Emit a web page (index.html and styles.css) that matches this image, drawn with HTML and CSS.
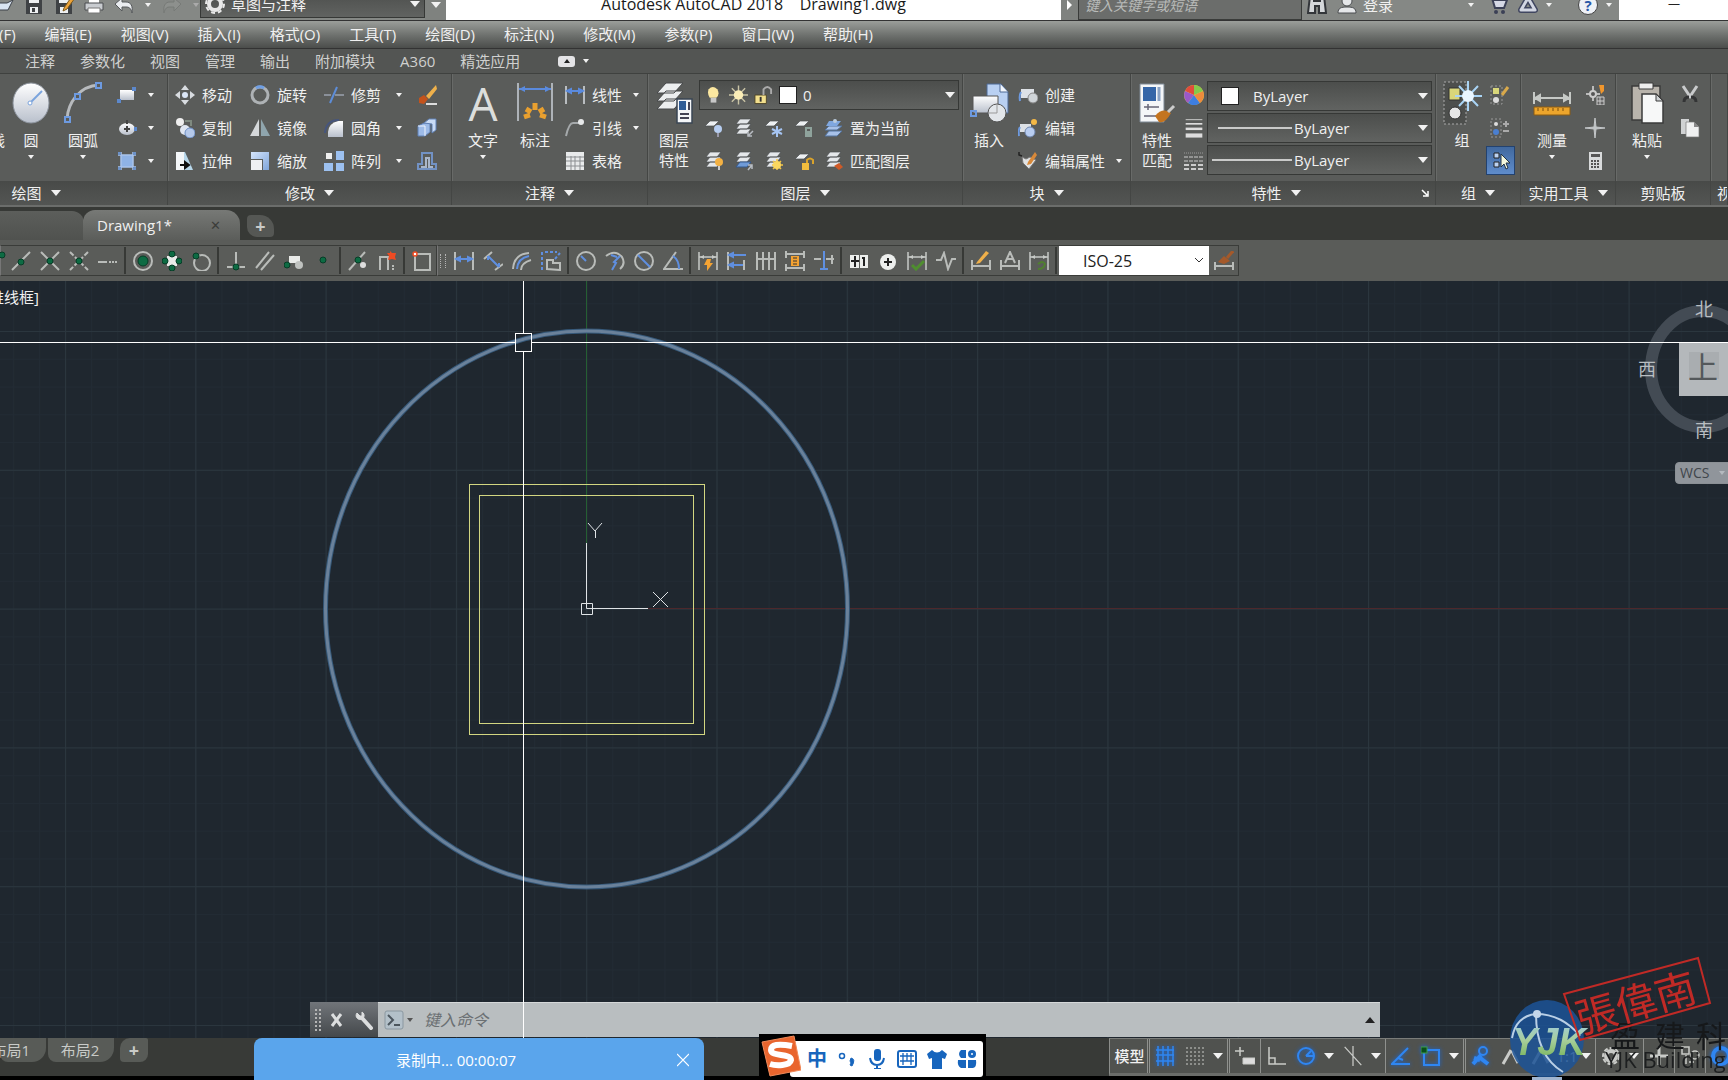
FILE: index.html
```html
<!DOCTYPE html>
<html lang="zh-CN">
<head>
  <meta charset="UTF-8">
  <meta name="viewport" content="width=device-width, initial-scale=1.0">
  <title>Autodesk AutoCAD 2018 - Drawing1.dwg</title>
  <link rel="stylesheet" href="styles.css">
</head>
<body>

  <!-- shared icon parts -->
  <svg class="sprite" aria-hidden="true">
    <defs>
      <linearGradient id="silver" x1="0" y1="0" x2="0" y2="1">
        <stop offset="0" stop-color="#ffffff"/><stop offset="1" stop-color="#b9c0cc"/>
      </linearGradient>
      <linearGradient id="blue" x1="0" y1="0" x2="1" y2="1">
        <stop offset="0" stop-color="#d5e5fb"/><stop offset="1" stop-color="#7fa5da"/>
      </linearGradient>
    </defs>
    <symbol id="stack" viewBox="0 0 20 20">
      <path d="M6 1h11l-4 5H2zM6 6h11l-4 5H2zM6 11h11l-4 5H2z" fill="#e4e7ea" stroke="#4b4d50" stroke-width=".7"/>
    </symbol>
    <symbol id="stackblue" viewBox="0 0 20 20">
      <path d="M6 1h11l-4 5H2zM6 6h11l-4 5H2z" fill="#e4e7ea" stroke="#4b4d50" stroke-width=".7"/>
      <path d="M6 11h11l-4 5H2z" fill="#6f9bd8" stroke="#35588c"/>
    </symbol>
    <symbol id="sheet" viewBox="0 0 20 20">
      <path d="M6 3h9l-5 5H1z" fill="#edf0f2" stroke="#4b4d50" stroke-width=".7"/>
    </symbol>
    <symbol id="dim" viewBox="0 0 20 20">
      <path d="M1 1v18M19 1v18M1 6h18" stroke="#c6c9c6" stroke-width="1.5" fill="none"/>
      <path d="M2 6l4-2v4zM18 6l-4-2v4z" fill="#c6c9c6"/>
    </symbol>
  </svg>

  <header class="titlebar">
    <div class="quick">
      <button aria-label="打开"><svg viewBox="0 0 20 20"><path d="M1 8h12l6-3-5 10H1z" fill="#d9e4f1" stroke="#3d4148"/></svg></button>
      <button aria-label="保存"><svg viewBox="0 0 20 20"><path d="M2 1h16v18H2z" fill="#3f4245"/><path d="M5 1h10v7H5zM6 12h8v6H6z" fill="#eef0f2"/><path d="M8 13h3v4H8z" fill="#3f4245"/></svg></button>
      <button aria-label="另存为"><svg viewBox="0 0 20 20"><path d="M2 1h16v18H2z" fill="#3f4245"/><path d="M5 1h10v7H5zM6 12h8v6H6z" fill="#eef0f2"/><path d="M10 13L18 1l3 2-8 11-4 2z" fill="#eda33a" stroke="#7d5a1c"/></svg></button>
      <button aria-label="打印"><svg viewBox="0 0 20 20"><path d="M5 1h10v7H5z" fill="#fff"/><path d="M1 8h18v7H1z" fill="#c9ccd0" stroke="#4a4d50"/><path d="M4 13h12v5H4z" fill="#fff" stroke="#777"/></svg></button>
      <button aria-label="放弃"><svg viewBox="0 0 20 20"><path d="M1 9l7-6v4h4c5 0 7 4 6 11-1-5-3-6-6-6H8v4z" fill="#e9ecef" stroke="#55585b"/></svg></button>
      <i class="caret"></i>
      <button class="off" aria-label="重做"><svg viewBox="0 0 20 20"><path d="M19 9l-7-6v4H8c-5 0-7 4-6 11 1-5 3-6 6-6h4v4z" fill="#8d908d" stroke="#777a77"/></svg></button>
      <i class="caret off"></i>
    </div>
    <div class="combo workspace">
      <svg viewBox="0 0 20 20"><circle cx="10" cy="10" r="6" fill="none" stroke="#e8e8e8" stroke-width="4"/><circle cx="10" cy="10" r="9" fill="none" stroke="#e8e8e8" stroke-width="2" stroke-dasharray="4 3"/></svg>
      <select aria-label="工作空间"><option>草图与注释</option></select>
      <i class="caret big"></i>
    </div>
    <button class="custom" aria-label="自定义"><i class="caret big"></i></button>
    <div class="apptitle">Autodesk AutoCAD 2018&nbsp;&nbsp;&nbsp; Drawing1.dwg</div>
    <button class="expand" aria-label="展开"><i class="caret right"></i></button>
    <input class="search" type="text" placeholder="键入关键字或短语" aria-label="搜索">
    <div class="account">
      <button aria-label="查找"><svg viewBox="0 0 20 20"><path d="M3 1h4v5h6V1h4l2 17h-7v-7H8v7H1z" fill="#d5d8db" stroke="#33363a" stroke-width="2"/></svg></button>
      <button class="login"><svg viewBox="0 0 20 20"><circle cx="10" cy="6" r="5" fill="#e5e7e9" stroke="#4a4d50"/><path d="M1 18c0-5 3-6 9-6s9 1 9 6z" fill="#e5e7e9" stroke="#4a4d50"/></svg>登录</button>
      <i class="caret"></i>
      <button class="cart" aria-label="商店"><svg viewBox="0 0 20 20"><path d="M1 3h3l3 10h9l3-8H5" fill="#d5d8e5" stroke="#3b4056" stroke-width="2"/><circle cx="8" cy="17" r="2" fill="#3b4056"/><circle cx="15" cy="17" r="2" fill="#3b4056"/></svg></button>
      <button aria-label="A360"><svg viewBox="0 0 20 20"><path d="M10 3l7 12H3z" fill="none" stroke="#404660" stroke-width="6" stroke-linejoin="round"/><path d="M10 3l7 12H3z" fill="none" stroke="#d2d6e2" stroke-width="3" stroke-linejoin="round"/></svg></button>
      <i class="caret"></i>
      <button class="help" aria-label="帮助">?</button>
      <i class="caret"></i>
    </div>
    <div class="window"><button aria-label="最小化">—</button></div>
  </header>

  <nav class="menubar">
    <a href="#">文件(F)</a>
    <a href="#">编辑(E)</a>
    <a href="#">视图(V)</a>
    <a href="#">插入(I)</a>
    <a href="#">格式(O)</a>
    <a href="#">工具(T)</a>
    <a href="#">绘图(D)</a>
    <a href="#">标注(N)</a>
    <a href="#">修改(M)</a>
    <a href="#">参数(P)</a>
    <a href="#">窗口(W)</a>
    <a href="#">帮助(H)</a>
  </nav>

  <nav class="tabs">
    <a href="#">注释</a>
    <a href="#">参数化</a>
    <a href="#">视图</a>
    <a href="#">管理</a>
    <a href="#">输出</a>
    <a href="#">附加模块</a>
    <a href="#">A360</a>
    <a href="#">精选应用</a>
    <button class="minimize" aria-label="最小化功能区"><i class="caret up"></i></button>
    <i class="caret"></i>
  </nav>

  <main class="ribbon">

    <section class="panel draw">
      <div class="tools">
        <button class="tall cut" aria-label="多段线"><svg></svg><span>线</span></button>
        <button class="tall circle">
          <svg viewBox="0 0 40 44"><ellipse cx="20" cy="22" rx="18" ry="20" fill="url(#silver)" stroke="#8b929c"/><path d="M20 21l11-11" stroke="#7ba4dd" stroke-width="2"/><circle cx="19" cy="22" r="2" fill="#fff" stroke="#7ba4dd"/></svg>
          <span>圆</span><i class="caret"></i>
        </button>
        <button class="tall arc">
          <svg viewBox="0 0 40 44"><path d="M4 38C5 22 16 5 36 4" fill="none" stroke="#b7babd" stroke-width="3"/><path d="M2 36h5v5H2zM12 13h5v5h-5zM33 2h5v5h-5z" fill="#5a5c5a" stroke="#6d9ae0" stroke-width="2"/></svg>
          <span>圆弧</span><i class="caret"></i>
        </button>
        <div class="rows">
          <button class="cmd" aria-label="矩形"><svg viewBox="0 0 20 20"><path d="M3 5h14v10H3z" fill="url(#silver)"/><path d="M0 14h4v4H0zM15 2h4v4h-4z" fill="#5c88cc"/></svg><i class="caret"></i></button>
          <button class="cmd" aria-label="椭圆"><svg viewBox="0 0 20 20"><ellipse cx="10" cy="11" rx="8" ry="6" fill="url(#silver)"/><path d="M10 8v6M7 11h6" stroke="#444" stroke-width="2"/><path d="M10 2v4" stroke="#444" stroke-width="2"/><path d="M17 9h3v4h-3z" fill="#5c88cc"/></svg><i class="caret"></i></button>
          <button class="cmd" aria-label="图案填充"><svg viewBox="0 0 20 20"><path d="M4 4h12v12H4z" fill="#8fb3e6"/><path d="M4 1v18M16 1v18M1 4h18M1 16h18" stroke="#a9c4ec" stroke-width="1.5"/><path d="M1 1h3v3H1zM16 1h3v3h-3zM1 16h3v3H1zM16 16h3v3h-3z" fill="#6d92c8"/></svg><i class="caret"></i></button>
        </div>
      </div>
      <h2>绘图<i class="caret big"></i></h2>
    </section>

    <section class="panel modify">
      <div class="tools">
        <div class="grid">
          <button class="cmd"><svg viewBox="0 0 20 20"><circle cx="10" cy="10" r="3" fill="#dbe6f6"/><path d="M10 0l4 5H6zM10 20l4-5H6zM0 10l5-4v8zM20 10l-5-4v8z" fill="#d8dce0"/></svg>移动</button>
          <button class="cmd"><svg viewBox="0 0 20 20"><circle cx="10" cy="10" r="8" fill="none" stroke="#aeb2b5" stroke-width="3"/><path d="M6 3a8 8 0 0 1 8 0" fill="none" stroke="#6f9fe4" stroke-width="3"/></svg>旋转</button>
          <button class="cmd"><svg viewBox="0 0 20 20"><path d="M0 10h7M11 10h9" stroke="#8a9099" stroke-width="2"/><path d="M13 2L6 18" stroke="#5d8dd8" stroke-width="2"/></svg>修剪<i class="caret"></i></button>
          <button class="cmd" aria-label="删除"><svg viewBox="0 0 20 20"><path d="M19 0l1 4-8 10-3-3z" fill="#efb14b"/><path d="M2 13l5-3 4 4-4 5-5-1z" fill="#c4531c"/><path d="M9 19h11" stroke="#ddd" stroke-width="2"/></svg></button>

          <button class="cmd"><svg viewBox="0 0 20 20"><circle cx="5" cy="4" r="4" fill="#eee"/><path d="M10 3h6v5" fill="none" stroke="#7f8a80" stroke-width="2"/><circle cx="10" cy="12" r="5" fill="#dfe6f1"/><circle cx="15" cy="15" r="5" fill="#b5c9ea" stroke="#6d8fc4"/></svg>复制</button>
          <button class="cmd"><svg viewBox="0 0 20 20"><path d="M9 1v17H0z" fill="#d5d8da"/><path d="M11 1v17h9z" fill="#8fa5ad"/></svg>镜像</button>
          <button class="cmd"><svg viewBox="0 0 20 20"><path d="M4 19V14Q5 5 14 3h5v16z" fill="url(#silver)"/><path d="M1 15Q2 2 15 2" fill="none" stroke="#46557c" stroke-width="2"/></svg>圆角<i class="caret"></i></button>
          <button class="cmd" aria-label="分解"><svg viewBox="0 0 20 20"><path d="M1 8l6-3h6v9l-5 4H1z" fill="#9dbbe8" stroke="#5f80b5"/><path d="M7 5l5-4h7v11l-4 3V6z" fill="#c9dbf5" stroke="#5f80b5"/><path d="M1 8h7v10" fill="none" stroke="#eef4fd"/></svg></button>

          <button class="cmd"><svg viewBox="0 0 20 20"><path d="M1 1h9l8 18H1z" fill="#b7d7ea"/><path d="M1 1h8v18H1z" fill="#f3f6f8"/><path d="M5 14h7M10 11l4 3-4 3z" stroke="#111" stroke-width="2"/></svg>拉伸</button>
          <button class="cmd"><svg viewBox="0 0 20 20"><path d="M1 1h18v18h-6V8H1z" fill="url(#blue)"/><path d="M1 9h11v10H1z" fill="#eef0f3"/></svg>缩放</button>
          <button class="cmd"><svg viewBox="0 0 20 20"><path d="M2 2h6v6H2z" fill="#eee"/><path d="M12 0h8v9h-8zM0 12h9v8H0zM12 12h8v8h-8z" fill="#9cc0ef"/></svg>阵列<i class="caret"></i></button>
          <button class="cmd" aria-label="偏移"><svg viewBox="0 0 20 20"><path d="M1 18h18v-5h-4V2H5v11H1z" fill="none" stroke="#7292c4" stroke-width="2"/><path d="M4 16h5V7h3v9h4" fill="none" stroke="#a9b6ca" stroke-width="2"/></svg></button>
        </div>
      </div>
      <h2>修改<i class="caret big"></i></h2>
    </section>

    <section class="panel annotate">
      <div class="tools">
        <button class="tall"><b class="letter">A</b><span>文字</span><i class="caret"></i></button>
        <button class="tall">
          <svg viewBox="0 0 40 44"><path d="M3 2v38M37 2v38" stroke="#aeb3b8" stroke-width="2"/><path d="M4 8h32" stroke="#5a8ade" stroke-width="2"/><path d="M4 8l6-3v6zM36 8l-6-3v6z" fill="#5a8ade"/><path d="M9 36l6-2M11 28l5 3M20 22v7M29 28l-5 3M31 36l-6-2" stroke="#e9a02f" stroke-width="5"/></svg>
          <span>标注</span>
        </button>
        <div class="rows">
          <button class="cmd"><svg viewBox="0 0 20 20"><path d="M1 1v18M19 1v18" stroke="#b9bdc0" stroke-width="2"/><path d="M2 6h16M2 6l4-2v4zM18 6l-4-2v4z" stroke="#5a8ade" fill="#5a8ade" stroke-width="2"/></svg>线性<i class="caret"></i></button>
          <button class="cmd"><svg viewBox="0 0 20 20"><path d="M1 18Q4 5 8 5h6" fill="none" stroke="#a5a9ab" stroke-width="2"/><circle cx="16" cy="4" r="3" fill="#e7e9ea"/></svg>引线<i class="caret"></i></button>
          <button class="cmd"><svg viewBox="0 0 20 20"><path d="M1 1h18v18H1z" fill="#e8eaeb"/><path d="M1 6h18M1 10h18M1 15h18M6 5v14M10 5v14M15 5v14" stroke="#8b8e91"/></svg>表格</button>
        </div>
      </div>
      <h2>注释<i class="caret big"></i></h2>
    </section>

    <section class="panel layers">
      <div class="tools">
        <button class="tall">
          <svg viewBox="0 0 40 44"><path d="M12 2h17l-9 10H3zM12 10h17l-9 10H3zM12 18h17l-9 10H3z" fill="#eceeef" stroke="#46484a"/><path d="M23 18h15v24H23z" fill="#f4f6f8" stroke="#3a4654" stroke-width="1.5"/><path d="M25 20h7v9h-7z" fill="#2f5c96"/><path d="M35 21v8M26 33h9M26 37h9" stroke="#445" stroke-width="2"/></svg>
          <span>图层<br>特性</span>
        </button>
        <div class="rows">
          <div class="combo layer">
            <svg viewBox="0 0 20 20"><path d="M6 13Q3 8 5 4q4-5 9 0 3 5-1 9z" fill="#fbe7a0"/><path d="M7 13h6v5H7z" fill="#c8c8c8"/></svg>
            <svg viewBox="0 0 20 20"><path d="M10 0v20M0 10h20M3 3l14 14M17 3L3 17" stroke="#c9c3a5" stroke-width="1.5"/><circle cx="10" cy="10" r="5" fill="#fbeeb8"/></svg>
            <svg viewBox="0 0 20 20"><path d="M1 10h12v9H1z" fill="#f2df8d" stroke="#4d4528"/><path d="M10 10V4q4-5 8 0v5" fill="none" stroke="#aaa" stroke-width="2"/><path d="M7 12v5" stroke="#333" stroke-width="2"/></svg>
            <b class="swatch"></b>
            <select aria-label="图层"><option>0</option></select>
            <i class="caret big"></i>
          </div>
          <div class="strip">
            <button aria-label="关"><svg viewBox="0 0 20 20"><use href="#sheet"/><circle cx="14" cy="11" r="4" fill="#b6cdf0"/><path d="M14 15v4" stroke="#99a" stroke-width="2"/></svg></button>
            <button aria-label="隔离"><svg viewBox="0 0 20 20"><use href="#stack"/><path d="M19 13l-5 5m0-4v4h4" stroke="#b8bcc2" fill="none" stroke-width="1.5"/></svg></button>
            <button aria-label="冻结"><svg viewBox="0 0 20 20"><use href="#sheet"/><path d="M13 8v11M8 11l10 5M18 11L8 16" stroke="#a5c4f2" stroke-width="2"/></svg></button>
            <button aria-label="锁定"><svg viewBox="0 0 20 20"><use href="#sheet"/><path d="M11 13h7v6h-7z" fill="#8fa39c"/><path d="M12 13v-3h5v3" stroke="#8fa39c" fill="none" stroke-width="2"/></svg></button>
            <button class="wide"><svg viewBox="0 0 20 20"><path d="M5 8h13l-5 4H1zM5 13h13l-5 5H1z" fill="#a7c1e8" stroke="#54749f"/><path d="M5 3h12l-4 5H2z" fill="#7fa7df"/><circle cx="11" cy="3" r="2" fill="#bcd"/></svg>置为当前</button>
          </div>
          <div class="strip">
            <button aria-label="打开所有图层"><svg viewBox="0 0 20 20"><use href="#stack"/><circle cx="15" cy="11" r="4" fill="#f3b143"/><path d="M15 15v4" stroke="#ccc" stroke-width="2"/></svg></button>
            <button aria-label="取消隔离"><svg viewBox="0 0 20 20"><use href="#stackblue"/><path d="M14 19l4-5m-4 0h4v4" stroke="#b8bcc2" fill="none" stroke-width="1.5"/></svg></button>
            <button aria-label="解冻"><svg viewBox="0 0 20 20"><use href="#stack"/><path d="M13 8v11M8 14h11M9 10l8 8M17 10l-8 8" stroke="#f6c544" stroke-width="1.5"/><circle cx="13" cy="14" r="4" fill="#fbd75f"/></svg></button>
            <button aria-label="解锁"><svg viewBox="0 0 20 20"><use href="#sheet"/><path d="M8 12h7v7H8z" fill="#f2bd3e"/><path d="M13 12V9q3-3 6 0v4" stroke="#d9a32c" fill="none" stroke-width="2"/></svg></button>
            <button class="wide"><svg viewBox="0 0 20 20"><use href="#stack"/><path d="M10 15l5-3 4 4-4 3z" fill="#cf5a27"/></svg>匹配图层</button>
          </div>
        </div>
      </div>
      <h2>图层<i class="caret big"></i></h2>
    </section>

    <section class="panel block">
      <div class="tools">
        <button class="tall">
          <svg viewBox="0 0 40 44"><path d="M18 3h14l7 8v21H18z" fill="#b9d0f2" stroke="#4c6894"/><path d="M31 3v8h8" fill="#f2f6fc" stroke="#4c6894"/><path d="M4 15h25v17H4z" fill="url(#silver)" stroke="#555"/><circle cx="28" cy="32" r="9" fill="#e2e6ea" stroke="#555"/><path d="M28 32v-9M28 32h-8" stroke="#999"/><path d="M2 30h5v5H2z" fill="none" stroke="#6d9ae0" stroke-width="2"/></svg>
          <span>插入</span>
        </button>
        <div class="rows">
          <button class="cmd"><svg viewBox="0 0 20 20"><path d="M3 4h13v9H3z" fill="#dde1e6"/><circle cx="15" cy="13" r="5" fill="#cfd4d8" stroke="#888"/><path d="M3 7Q1 10 2 16" stroke="#6d9ae0" fill="none" stroke-width="2"/></svg>创建</button>
          <button class="cmd"><svg viewBox="0 0 20 20"><path d="M2 6h11v8H2z" fill="#dde1e6"/><circle cx="12" cy="14" r="5" fill="#b8cdf0" stroke="#6f86ad"/><circle cx="16" cy="4" r="3" fill="#f4b846"/><path d="M2 9Q0 12 1 18" stroke="#6d9ae0" fill="none" stroke-width="2"/></svg>编辑</button>
          <button class="cmd"><svg viewBox="0 0 20 20"><path d="M1 1v3l3 1" fill="none" stroke="#222" stroke-width="1.5"/><path d="M4 6l4 2 4-2 6 3-7 9-6-6z" fill="#e1e3e4" stroke="#777"/><path d="M10 11l7-10 2 3-6 9-4 1z" fill="#d8893a"/></svg>编辑属性<i class="caret"></i></button>
        </div>
      </div>
      <h2>块<i class="caret big"></i></h2>
    </section>

    <section class="panel props">
      <div class="tools">
        <button class="tall">
          <svg viewBox="0 0 40 44"><path d="M3 3h24v38H3z" fill="#f4f6f8" stroke="#7d8894"/><path d="M6 6h13v14H6z" fill="#3566a8"/><path d="M22 6v14" stroke="#8ba3c4" stroke-width="3"/><path d="M7 26h15M7 35h12M11 23v6" stroke="#667" stroke-width="1.5"/><path d="M18 35q6-7 12-5l4 2q-6 11-12 9z" fill="#c4741f"/><path d="M31 31l6-6" stroke="#ccc" stroke-width="3"/></svg>
          <span>特性<br>匹配</span>
        </button>
        <div class="rows icons">
          <svg viewBox="0 0 20 20"><circle cx="10" cy="10" r="10" fill="#f5e04a"/><path d="M10 10V0a10 10 0 0 0-9 6z" fill="#e14b3b"/><path d="M10 10L1 6a10 10 0 0 0 3 12z" fill="#9a59c9"/><path d="M10 10l-6 8a10 10 0 0 0 12 0z" fill="#3d7ee0"/><path d="M10 10l6 8a10 10 0 0 0 3-12z" fill="#ee8b3c"/><path d="M10 10V0a10 10 0 0 1 9 6z" fill="#86c84c"/></svg>
          <svg viewBox="0 0 20 24"><path d="M0 2h20" stroke="#ddd"/><path d="M0 7h20" stroke="#ddd" stroke-width="2"/><path d="M0 13h20" stroke="#ddd" stroke-width="3"/><path d="M0 21h20" stroke="#ddd" stroke-width="5"/></svg>
          <svg viewBox="0 0 20 20"><path d="M0 2h20" stroke="#999" stroke-dasharray="1 1"/><path d="M0 6h20M0 10h20" stroke="#ccc" stroke-dasharray="4 1"/><path d="M0 14h20M0 18h20" stroke="#ccc" stroke-width="2" stroke-dasharray="5 2"/></svg>
        </div>
        <div class="rows fields">
          <div class="combo"><b class="swatch"></b><select aria-label="对象颜色"><option>ByLayer</option></select><i class="caret big"></i></div>
          <div class="combo"><hr><select aria-label="线宽"><option>ByLayer</option></select><i class="caret big"></i></div>
          <div class="combo"><hr class="long"><select aria-label="线型"><option>ByLayer</option></select><i class="caret big"></i></div>
        </div>
      </div>
      <h2>特性<i class="caret big"></i><svg class="launcher" viewBox="0 0 8 8"><path d="M1 1l5 5M7 2v5H2" stroke="#fff" stroke-width="1.5" fill="none"/></svg></h2>
    </section>

    <section class="panel group">
      <div class="tools">
        <button class="tall">
          <svg viewBox="0 0 40 44"><path d="M2 1h22v42H2z" fill="#4d4f4d" stroke="#aaa" stroke-dasharray="2 2"/><path d="M7 7h11v12H7z" fill="#d9d77a" stroke="#333"/><circle cx="13" cy="32" r="6" fill="#e6e6e6" stroke="#333"/><path d="M26 0v30M13 15h27M17 5l19 20M36 5L17 25" stroke="#a9d4f5" stroke-width="2"/><circle cx="26" cy="15" r="6" fill="#eaf6ff"/></svg>
          <span>组</span>
        </button>
        <div class="rows">
          <button class="cmd" aria-label="组编辑"><svg viewBox="0 0 20 20"><path d="M1 1h11v18H1z" fill="none" stroke="#999" stroke-dasharray="2 2"/><path d="M3 3h6v6H3z" fill="#d9d77a"/><circle cx="6" cy="15" r="3" fill="#ddd"/><path d="M18 2l-6 8" stroke="#d9a94b" stroke-width="3"/></svg></button>
          <button class="cmd" aria-label="添加到组"><svg viewBox="0 0 20 20"><path d="M1 1h10v18H1z" fill="none" stroke="#999" stroke-dasharray="2 2"/><circle cx="6" cy="6" r="2" fill="#ddd"/><circle cx="6" cy="14" r="3" fill="#4a7fd0"/><path d="M13 6h6M16 3v6M13 13h6" stroke="#aaa" stroke-width="2"/></svg></button>
          <button class="cmd on" aria-label="启用组选择"><svg viewBox="0 0 20 20"><path d="M3 2h5v5H3zM3 11h5v5H3z" fill="#bcd3f3" stroke="#222"/><path d="M10 3v13l3-3 2 5 2-1-2-5h4z" fill="#f4f8dd" stroke="#234"/></svg></button>
        </div>
      </div>
      <h2>组<i class="caret big"></i></h2>
    </section>

    <section class="panel utils">
      <div class="tools">
        <button class="tall">
          <svg viewBox="0 0 40 44"><path d="M2 11v12M38 11v12M3 17h34M3 17l5-3v6zM37 17l-5-3v6z" stroke="#c6c9c6" stroke-width="2" fill="#c6c9c6"/><path d="M2 26h36v8H2z" fill="#eca52c" stroke="#8a5a12"/><path d="M6 27v3M11 27v3M16 27v3M21 27v3M26 27v3M31 27v3" stroke="#7a4d0c"/></svg>
          <span>测量</span><i class="caret"></i>
        </button>
        <div class="rows">
          <button class="cmd" aria-label="快速选择"><svg viewBox="0 0 20 20"><path d="M1 9h14M8 1v15" stroke="#bbb" stroke-width="2"/><circle cx="8" cy="9" r="3" fill="#555" stroke="#ccc" stroke-width="2"/><path d="M14 0h5v6l-3 3z" fill="#f0962d"/><path d="M12 12h7v8h-7zM12 16h7M15 12v8" fill="#666" stroke="#ccc"/></svg></button>
          <button class="cmd" aria-label="点坐标"><svg viewBox="0 0 20 20"><path d="M10 0l1 9 9 1-9 1-1 9-1-9-9-1 9-1z" fill="#c2c5c7" stroke="#c2c5c7"/></svg></button>
          <button class="cmd" aria-label="快速计算器"><svg viewBox="0 0 20 20"><path d="M4 1h13v18H4z" fill="#d8dadb"/><path d="M6 3h9v3H6z" fill="#555"/><path d="M6 10h9M6 13h9M6 16h9" stroke="#555" stroke-width="2" stroke-dasharray="2 1"/></svg></button>
        </div>
      </div>
      <h2>实用工具<i class="caret big"></i></h2>
    </section>

    <section class="panel clip">
      <div class="tools">
        <button class="tall">
          <svg viewBox="0 0 40 44"><path d="M5 5h28v34H5z" fill="#b9b4ac" stroke="#3b3b3b" stroke-width="1.5"/><path d="M12 2h14v6H12z" fill="#eee" stroke="#3b3b3b"/><path d="M15 13h14l7 7v22H15z" fill="#f7f8f8" stroke="#3b3b3b" stroke-width="1.5"/><path d="M29 13v7h7z" fill="#cfd2d4" stroke="#3b3b3b"/></svg>
          <span>粘贴</span><i class="caret"></i>
        </button>
        <div class="rows">
          <button class="cmd" aria-label="剪切"><svg viewBox="0 0 20 20"><path d="M3 1l8 12M17 1L9 13" stroke="#c9cbcc" stroke-width="3"/><path d="M9 12q-5 0-5 5M11 12q5 0 5 5" stroke="#333435" stroke-width="3" fill="none"/></svg></button>
          <button class="cmd" aria-label="复制裁剪"><svg viewBox="0 0 20 20"><path d="M1 1h8v15H1z" fill="#d0d2d3"/><path d="M6 4h8l5 5v10H6z" fill="#f0f1f1" stroke="#777" stroke-width=".7"/><path d="M14 4v5h5z" fill="#888"/></svg></button>
        </div>
      </div>
      <h2>剪贴板</h2>
    </section>

    <section class="panel rest">
      <div class="tools"></div>
      <h2>视图</h2>
    </section>
  </main>

  <div class="filetabs">
    <button class="start" aria-label="开始"></button>
    <button class="file">Drawing1*<span>✕</span></button>
    <button class="add" aria-label="新图形">+</button>
  </div>

  <div class="toolbars">
    <div class="toolbar">
      <button class="first" aria-label="临时追踪点"><svg viewBox="0 0 20 20"><circle cx="16" cy="4" r="3" class="snap"/></svg></button>
      <button aria-label="端点"><svg viewBox="0 0 20 20"><path d="M1 19L19 1" class="ln"/><circle cx="10" cy="11" r="3" class="snap"/></svg></button>
      <button aria-label="交点"><svg viewBox="0 0 20 20"><path d="M1 1l18 18M19 1L1 19" class="ln"/><circle cx="10" cy="10" r="3" class="snap"/></svg></button>
      <button aria-label="外观交点"><svg viewBox="0 0 20 20"><path d="M1 1l18 18M19 1L1 19" class="ln" stroke-dasharray="5 2"/><circle cx="10" cy="10" r="3" class="snap"/></svg></button>
      <button aria-label="延长线"><svg viewBox="0 0 20 20"><path d="M0 11h9M11 11h2M14 11h2M17 11h2" class="ln"/></svg></button>
      <hr>
      <button aria-label="圆心"><svg viewBox="0 0 20 20"><circle cx="10" cy="10" r="9" fill="none" class="ln"/><circle cx="10" cy="10" r="5" class="snap"/></svg></button>
      <button aria-label="象限点"><svg viewBox="0 0 20 20"><path d="M5 5h10v10H5z" fill="#e8eae8"/><circle cx="10" cy="3" r="3" class="snap"/><circle cx="10" cy="17" r="3" class="snap"/><circle cx="3" cy="10" r="3" class="snap"/><circle cx="17" cy="10" r="3" class="snap"/></svg></button>
      <button aria-label="切点"><svg viewBox="0 0 20 20"><circle cx="11" cy="12" r="8" fill="none" class="ln"/><circle cx="5" cy="5" r="3" class="snap"/></svg></button>
      <hr>
      <button aria-label="垂足"><svg viewBox="0 0 20 20"><path d="M10 1v13M1 16h18" class="ln"/><circle cx="10" cy="16" r="3" class="snap"/></svg></button>
      <button aria-label="平行线"><svg viewBox="0 0 20 20"><path d="M1 17L14 1M6 19L19 4" class="ln"/></svg></button>
      <button aria-label="插入点"><svg viewBox="0 0 20 20"><path d="M5 5h11v7H5z" fill="#e8eae8"/><circle cx="15" cy="14" r="4" fill="#bfc2bf"/><circle cx="3" cy="14" r="3" class="snap"/></svg></button>
      <button aria-label="节点"><svg viewBox="0 0 20 20"><circle cx="10" cy="9" r="3" class="snap"/></svg></button>
      <hr>
      <button aria-label="最近点"><svg viewBox="0 0 20 20"><path d="M1 19L17 1" class="ln"/><circle cx="15" cy="14" r="3" fill="#ddd"/><circle cx="10" cy="9" r="3" class="snap"/></svg></button>
      <button aria-label="无"><svg viewBox="0 0 20 20"><path d="M3 19V6h8v13" fill="none" class="ln" stroke-width="3"/><path d="M16 14v5" class="ln" stroke-dasharray="2 1"/><path d="M13 0l2 2 4 0-1 4 1 3-4-1-4 1 1-4-2-3 3 0z" fill="#ee4b23"/></svg></button>
      <hr>
      <button aria-label="对象捕捉设置"><svg viewBox="0 0 20 20"><path d="M3 3h15v16H3z" fill="none" class="ln"/><circle cx="3" cy="3" r="2" fill="#fff" stroke="#ee4b23" stroke-width="1.5"/></svg></button>
    </div>

    <div class="toolbar dims">
      <b class="grip"></b>
      <button aria-label="线性"><svg viewBox="0 0 20 20"><path d="M1 1v18M19 1v18" class="ln"/><path d="M2 8h16M2 8l4-2v4zM18 8l-4-2v4z" class="bl"/></svg></button>
      <button aria-label="对齐"><svg viewBox="0 0 20 20"><path d="M1 8l8-7M12 19l8-6" class="ln"/><path d="M5 5l11 11M5 5v4M16 16v-4" class="bl"/></svg></button>
      <button aria-label="弧长"><svg viewBox="0 0 20 20"><path d="M1 18Q2 3 17 2M9 19Q9 12 19 9" fill="none" class="ln"/><path d="M5 18Q6 7 17 5" fill="none" class="bl"/></svg></button>
      <button aria-label="坐标"><svg viewBox="0 0 20 20"><path d="M6 18V9h6v3h7v7z" fill="none" class="ln"/><path d="M1 1v18M4 1h12M14 8l5-6" class="bl" stroke-dasharray="3 2"/></svg></button>
      <hr>
      <button aria-label="半径"><svg viewBox="0 0 20 20"><circle cx="10" cy="10" r="9" fill="none" class="ln"/><path d="M10 10L5 5" class="bl"/></svg></button>
      <button aria-label="折弯"><svg viewBox="0 0 20 20"><path d="M1 5Q10-2 17 6q4 7-2 12" fill="none" class="ln"/><path d="M7 19l4-7-2-1 6-6M6 4l6 2" fill="none" class="bl"/></svg></button>
      <button aria-label="直径"><svg viewBox="0 0 20 20"><circle cx="10" cy="10" r="9" fill="none" class="ln"/><path d="M4 4l12 12" class="bl"/></svg></button>
      <button aria-label="角度"><svg viewBox="0 0 20 20"><path d="M13 1L1 18h19" fill="none" class="ln"/><path d="M10 5q6 4 6 13" fill="none" class="bl"/></svg></button>
      <hr>
      <button aria-label="快速标注"><svg viewBox="0 0 20 20"><use href="#dim"/><path d="M9 8h4l-1 4h3l-6 8v-6H6z" fill="#f4a333"/></svg></button>
      <button aria-label="基线"><svg viewBox="0 0 20 20"><path d="M1 1v18M17 9v10" class="ln"/><path d="M2 4h17M2 14h14M2 4l4-2v4zM2 14l4-2v4z" class="bl"/></svg></button>
      <button aria-label="连续"><svg viewBox="0 0 20 20"><path d="M1 1v18M7 1v18M13 1v18M19 1v18M1 8h18" class="ln"/></svg></button>
      <button aria-label="等距标注"><svg viewBox="0 0 20 20"><path d="M1 0v7M19 0v7M1 3h18M1 13v7M19 13v7M1 17h18" class="ln"/><path d="M6 5h8v10H6z" fill="#f4a333"/><path d="M8 7h4M8 10h4M8 13h4" stroke="#333"/></svg></button>
      <button aria-label="折断标注"><svg viewBox="0 0 20 20"><path d="M0 8h7M12 8h8M18 4v9" class="ln"/><path d="M10 0v18M6 18h8" class="bl"/></svg></button>
      <hr>
      <button aria-label="公差"><svg viewBox="0 0 20 20"><path d="M1 4h9v13H1zM11 4h8v13h-8z" fill="#eceeec"/><path d="M6 5v11M2 10h8M13 7h2v8" fill="none" stroke="#222" stroke-width="2"/></svg></button>
      <button aria-label="圆心标记"><svg viewBox="0 0 20 20"><circle cx="10" cy="11" r="8" fill="#eceeec"/><path d="M10 7v8M6 11h8" stroke="#222" stroke-width="2"/></svg></button>
      <button aria-label="检验"><svg viewBox="0 0 20 20"><use href="#dim"/><path d="M5 14l4 4 8-8" stroke="#4f8e2f" stroke-width="3" fill="none"/></svg></button>
      <button aria-label="折弯线性"><svg viewBox="0 0 20 20"><path d="M0 9h5l3-7 4 16 4-10h4" fill="none" class="ln"/></svg></button>
      <hr>
      <button aria-label="编辑标注"><svg viewBox="0 0 20 20"><path d="M1 9v10M19 9v10M1 15h18" class="ln"/><path d="M6 11L15 0l3 2-9 10-4 1z" fill="#efb04a"/></svg></button>
      <button aria-label="编辑标注文字"><svg viewBox="0 0 20 20"><path d="M1 9v10M19 9v10M1 15h18M5 12l5-11 5 11M7 8h6" fill="none" class="ln"/></svg></button>
      <button aria-label="标注更新"><svg viewBox="0 0 20 20"><use href="#dim"/><path d="M9 13q5-4 7 0-1 5-7 5" stroke="#4f7f2f" stroke-width="2" fill="none"/></svg></button>
      <hr>
      <div class="dimstyle">
        <select aria-label="标注样式"><option>ISO-25</option></select>
        <svg viewBox="0 0 10 6"><path d="M1 0l4 4 4-4" fill="none" stroke="#333"/></svg>
      </div>
      <button aria-label="标注样式管理器"><svg viewBox="0 0 20 20"><path d="M1 11v8M19 11v8M1 15h18" class="ln"/><path d="M4 11l6-6 6 5-6 3z" fill="#a4592a"/><path d="M13 7l6-7" stroke="#a4592a" stroke-width="3"/></svg></button>
    </div>
  </div>

  <section class="canvas">
    <svg class="drawing">
      <defs>
        <pattern id="minor" x="65" y="50" width="26.06" height="27.76" patternUnits="userSpaceOnUse">
          <path d="M.5 0v28M0 .5h27" stroke="#222b34" fill="none"/>
        </pattern>
        <pattern id="major" x="65" y="50" width="130.3" height="138.8" patternUnits="userSpaceOnUse">
          <path d="M.5 0v139M0 .5h131" stroke="#2b363e" fill="none"/>
        </pattern>
      </defs>
      <rect width="100%" height="100%" fill="url(#minor)"/>
      <rect width="100%" height="100%" fill="url(#major)"/>
      <path d="M586.5 0v262" stroke="#255f33"/>
      <line x1="648" y1="327.5" x2="100%" y2="327.5" stroke="#4d282c"/>
      <ellipse cx="586.5" cy="328" rx="261" ry="278" fill="none" stroke="#36597a" stroke-width="5"/>
      <ellipse cx="586.5" cy="328" rx="261" ry="278" fill="none" stroke="#6a819a" stroke-width="3"/>
      <g fill="none" stroke="#d2d681">
        <rect x="469.5" y="203.5" width="235" height="250"/>
        <rect x="479.5" y="214.5" width="214" height="228"/>
      </g>
      <g fill="none" stroke="#dfe3e6">
        <path d="M586.5 262v65.5H648M581.5 322.5h11v11h-11z"/>
        <path d="M588 242l7 8 7-8M595.5 250v7M653 311l15 15M668 311l-15 15"/>
      </g>
    </svg>

    <div class="viewlabel">[-][俯视][二维线框]</div>

    <div class="viewcube">
      <svg viewBox="0 0 84 220">
        <ellipse cx="59" cy="88" rx="52" ry="58" fill="none" stroke="#434b54" stroke-width="12"/>
        <path d="M35 61h49v54H35z" fill="#b4b8bb"/>
        <path d="M45 71h30v27H45z" fill="#a9adb0"/>
      </svg>
      <span class="north">北</span>
      <span class="west">西</span>
      <span class="top">上</span>
      <span class="south">南</span>
      <button>WCS<i class="caret"></i></button>
    </div>

    <div class="command">
      <b class="grip"></b>
      <button aria-label="关闭"><svg viewBox="0 0 20 20"><path d="M6 4l9 12M15 4L6 16" stroke="#dcdedf" stroke-width="3"/></svg></button>
      <button aria-label="自定义"><svg viewBox="0 0 20 20"><path d="M8 8l9 10" stroke="#dcdedf" stroke-width="4" stroke-linecap="round"/><path d="M3 3a4 4 0 1 0 5-1v4H6z" fill="#dcdedf" stroke="#dcdedf"/></svg></button>
      <label>
        <svg viewBox="0 0 20 20"><rect x="1" y="1" width="18" height="18" rx="2" fill="#b3c0c9" stroke="#8a97a0"/><path d="M4 5l5 5-5 5M10 15h6" stroke="#4c565e" stroke-width="2" fill="none"/></svg>
        <i class="caret"></i>
        <input type="text" placeholder="键入命令" aria-label="命令行">
        <i class="caret up"></i>
      </label>
    </div>

    <!-- crosshair with pickbox -->
    <svg class="drawing cursor">
      <path d="M523.5 0v52M0 61.5h515"/>
      <line x1="523.5" y1="71" x2="523.5" y2="100%"/>
      <line x1="532" y1="61.5" x2="100%" y2="61.5"/>
      <rect x="515.5" y="52.5" width="16" height="18"/>
    </svg>
  </section>

  <footer class="statusbar">
    <div class="layouts">
      <button class="first">布局1</button>
      <button>布局2</button>
      <button class="plus" aria-label="新建布局">+</button>
    </div>
    <div class="modes">
      <button class="model">模型</button>
      <hr class="double">
      <button class="lit" aria-label="栅格"><svg viewBox="0 0 20 20"><path d="M3 0v20M8 0v20M13 0v20M18 0v20M1 4h18M1 9h18M1 15h18" stroke-width="1.5"/></svg></button>
      <button aria-label="捕捉"><svg viewBox="0 0 20 20"><path d="M1 2h18M1 6h18M1 10h18M1 14h18M1 18h18" stroke-dasharray="2 2"/></svg></button>
      <i class="caret big"></i>
      <hr class="double">
      <button aria-label="动态输入"><svg viewBox="0 0 20 20"><path d="M5 1v9M0 5h9" stroke-width="1.5"/><path d="M8 12h12v6H8z" fill="#ddd"/></svg></button>
      <hr>
      <button aria-label="正交"><svg viewBox="0 0 20 20"><path d="M3 1v17h17M3 12h6v6" stroke-width="1.5"/></svg></button>
      <button class="lit" aria-label="极轴"><svg viewBox="0 0 20 20"><circle cx="10" cy="10" r="8" stroke-width="2"/><path d="M10 10h8M10 10l5-5" stroke-width="2"/></svg></button>
      <i class="caret big"></i>
      <button aria-label="等轴测"><svg viewBox="0 0 20 24"><path d="M10 0v24M0 1l20 22" stroke-width="1.5"/></svg></button>
      <i class="caret big"></i>
      <hr>
      <button class="lit" aria-label="对象捕捉追踪"><svg viewBox="0 0 20 20"><path d="M17 2L1 18h18M7 12l5 2" stroke-width="2"/></svg></button>
      <button class="lit" aria-label="对象捕捉"><svg viewBox="0 0 20 20"><path d="M3 4h15v15H3z" stroke-width="2"/><rect x="0" y="1" width="6" height="6" fill="#0a4f1c" stroke="#3f9d48"/></svg></button>
      <i class="caret big"></i>
      <hr class="double">
      <button class="lit" aria-label="注释可见性"><svg viewBox="0 0 20 20"><circle cx="12" cy="5" r="4" stroke-width="2"/><path d="M10 9L2 18M8 11l9 7M3 12l6 2" stroke-width="4"/></svg></button>
      <button aria-label="自动缩放"><svg viewBox="0 0 20 20"><path d="M10 4L2 18M11 5l6 12" stroke-width="3"/></svg></button>
      <button aria-label="注释比例图标"><svg viewBox="0 0 20 20"><path d="M10 4L2 18M11 5l6 12" stroke-width="3"/></svg></button>
      <button class="scale">1:1</button>
      <i class="caret big"></i>
      <hr>
      <button aria-label="工作空间切换"><svg viewBox="0 0 20 20"><circle cx="10" cy="10" r="5" stroke-width="4"/><circle cx="10" cy="10" r="8" stroke-width="2" stroke-dasharray="4 2"/></svg></button>
      <i class="caret big"></i>
      <hr>
      <button aria-label="注释监视器"><svg viewBox="0 0 20 20"><path d="M10 1v18M1 10h18" stroke-width="3"/></svg></button>
      <hr>
      <button aria-label="隔离对象"><svg viewBox="0 0 20 20"><path d="M2 1h7v7H2zM6 9v9M9 16h5" stroke-width="1.5"/><circle cx="15" cy="9" r="4" stroke-width="1.5"/></svg></button>
      <hr>
      <button class="lit" aria-label="硬件加速"><svg viewBox="0 0 20 20"><circle cx="10" cy="10" r="8" stroke-width="4"/></svg></button>
    </div>
  </footer>

  <!-- floating windows -->
  <div class="recorder">
    <span>录制中... 00:00:07</span>
    <button aria-label="关闭"><svg viewBox="0 0 12 14"><path d="M0 1l12 12M12 1L0 13" stroke="#fff" stroke-width="1.2"/></svg></button>
  </div>

  <div class="ime">
    <div class="imebar">
      <button class="zh">中</button>
      <button aria-label="标点"><svg viewBox="0 0 20 20"><circle cx="5" cy="7" r="2.5" fill="none" stroke="#1765bd" stroke-width="1.5"/><path d="M14 9q5 1 1 8l-2-1q2-2 0-4z" fill="#1765bd" stroke="#1765bd"/></svg></button>
      <button aria-label="语音"><svg viewBox="0 0 20 20"><rect x="7" y="0" width="7" height="12" rx="3" fill="#1765bd"/><path d="M3 9q1 7 7 7t7-7M10 16v3M7 20h7" fill="none" stroke="#1765bd" stroke-width="2"/></svg></button>
      <button aria-label="键盘"><svg viewBox="0 0 20 20"><rect x="1" y="2" width="18" height="16" rx="2" fill="none" stroke="#1765bd" stroke-width="2"/><path d="M3 7h14M3 12h14M6 4v12M10 4v8M14 4v12" stroke="#1765bd" stroke-width="1.3"/></svg></button>
      <button aria-label="皮肤"><svg viewBox="0 0 20 20"><path d="M5 1q5 5 10 0l5 4-2 5-3-1v11H5V9L2 10 0 5z" fill="#1765bd"/></svg></button>
      <button aria-label="工具箱"><svg viewBox="0 0 20 20"><path d="M4 1h5v8H4q-4-4 0-8zM1 11h8v8H4q-4-2-3-8zM11 11h8q1 7-3 8h-5z" fill="#1765bd"/><circle cx="15" cy="5" r="4" fill="#1765bd"/><circle cx="15" cy="5" r="1" fill="#fff"/></svg></button>
    </div>
    <svg class="sogou" viewBox="0 0 40 42"><path d="M1 7L33 1l7 34L9 41z" fill="#e9652e" stroke="#f08a5a"/><path d="M31 11Q10 7 10 15c0 7 20 3 20 10-1 6-15 6-21 4" fill="none" stroke="#fff" stroke-width="6"/></svg>
  </div>

  <svg class="watermark" viewBox="0 0 228 130">
    <defs>
      <linearGradient id="yjk" x1="0" y1="0" x2="0" y2="1">
        <stop offset="0" stop-color="#9dcbe4"/><stop offset=".45" stop-color="#a8cf9c"/><stop offset="1" stop-color="#6fb04e"/>
      </linearGradient>
    </defs>
    <ellipse cx="47" cy="89" rx="37" ry="39" fill="#1c5496" opacity=".85"/>
    <path d="M12 88q4-22 24-24 26 0 44 22M36 64q0 42 27 58" fill="none" stroke="#b9cfe6" stroke-width="2"/>
    <circle cx="37" cy="64" r="4" fill="#c3d6ea"/>
    <path d="M32 127h30v3H32z" fill="#9fb4cf"/>
    <text x="12" y="105" class="yjk" fill="url(#yjk)">YJK</text>
    <text x="110 155 196" y="97" class="zh">盈建科</text>
    <text x="105" y="118" class="en">YJK Building</text>
    <path d="M64 44L198 8l12 45L80 90z" fill="none" stroke="#c02a26" stroke-width="2"/>
    <text class="seal" transform="translate(81 84) rotate(-16)">張偉南</text>
  </svg>

</body>
</html>
```
FILE: styles.css
```css
* {
  box-sizing: border-box;
}

body {
  margin: 0;
  min-height: 100vh;
  display: flex;
  flex-direction: column;
  overflow: hidden;
  background: #000;
  color: #f0f0f0;
  font-family: "Open Sans", "Noto Sans CJK SC", sans-serif;
  font-size: 15px;
  line-height: 20px;
}

button, select, input {
  font: inherit;
  color: inherit;
  background: none;
  border: none;
  padding: 0;
  margin: 0;
}

button {
  display: flex;
  align-items: center;
  white-space: nowrap;
}

select {
  appearance: none;
  flex: 1;
  min-width: 0;
}

svg {
  flex: none;
  width: 20px;
  height: 20px;
}

a {
  color: inherit;
  text-decoration: none;
  white-space: nowrap;
}

.sprite {
  position: absolute;
  width: 0;
  height: 0;
}

.caret {
  flex: none;
  border: 3px solid transparent;
  border-top: 4px solid #f2f2f2;
  border-bottom: 0;
}

.caret.big {
  border-width: 6px 5px 0;
}

.caret.up {
  border-top: 0;
  border-bottom: 4px solid #222;
}

.caret.right {
  border: 5px solid transparent;
  border-left: 5px solid #fff;
  border-right: 0;
}

.caret.off {
  border-top-color: #aaa;
}

/* title bar, upper part is outside the window */
.titlebar {
  display: flex;
  align-items: flex-end;
  height: 21px;
  overflow: hidden;
  background: #858885;
  border-bottom: 1px solid #333;
}

.titlebar > * {
  flex: none;
  height: 30px;
}

.quick {
  display: flex;
  align-items: center;
  width: 206px;
  gap: 10px;
  margin-left: -6px;
}

.quick .caret {
  margin: 0 1px;
}

.titlebar .combo.workspace {
  width: 225px;
  height: 28px;
  margin-bottom: 2px;
  padding: 0 4px 0 4px;
  gap: 6px;
}

.custom, .expand {
  justify-content: center;
  width: 21px;
  background: #7f827f;
}

.expand {
  width: 17px;
}

.titlebar .apptitle {
  flex: 1;
  background: #fff;
  color: #1a1a1a;
  font-size: 16px;
  line-height: 28px;
  text-align: center;
  white-space: nowrap;
}

.search {
  width: 224px;
  padding: 0 6px;
  background: #6b6d6b;
  border: 1px solid #3a3c3a;
  font-size: 14px;
  font-style: italic;
}

.search::placeholder {
  color: #b8bab8;
}

.account {
  display: flex;
  align-items: center;
  width: 317px;
  padding-left: 5px;
  gap: 10px;
}

.login {
  gap: 6px;
  margin-right: 67px;
}

.account .caret {
  margin-left: -2px;
}

.account .cart {
  margin-left: 4px;
}

.help {
  justify-content: center;
  width: 20px;
  height: 20px;
  margin-left: 16px;
  border: 1px solid #444;
  border-radius: 50%;
  background: #eef1f6;
  color: #2a58a8;
  font-weight: 700;
}

.window {
  width: 109px;
  padding-left: 49px;
  background: #fff;
  color: #222;
}

.window button {
  height: 28px;
  font-size: 12px;
}

.menubar {
  display: flex;
  align-items: center;
  gap: 29px;
  height: 28px;
  margin-left: -31px;
  padding-bottom: 2px;
  background: linear-gradient(#9b9e9a, #6c6f6c 55%, #4b4d4b);
  border-bottom: 1px solid #333;
}

.tabs {
  display: flex;
  align-items: center;
  gap: 25px;
  height: 25px;
  padding-left: 25px;
  background: #535553;
  border-bottom: 1px solid #3f413f;
  color: #cfd0cf;
}

.minimize {
  justify-content: center;
  width: 17px;
  height: 11px;
  margin-left: 13px;
  border-radius: 3px;
  background: #e4e4e6;
}

.tabs .minimize + .caret {
  margin-left: -17px;
}

.ribbon {
  display: flex;
  height: 133px;
  background: #5a5c5a;
  border-bottom: 2px solid #6b6d6b;
  overflow: hidden;
}

.panel {
  flex: none;
  display: flex;
  flex-direction: column;
  border-right: 1px solid #444644;
  box-shadow: 1px 0 #686a68;
}

.tools {
  flex: 1;
  display: flex;
  padding: 4px 0 0 7px;
}

.panel h2 {
  display: flex;
  align-items: center;
  justify-content: center;
  gap: 9px;
  height: 24px;
  margin: 0;
  background: linear-gradient(#484a48, #535553);
  font-size: 15px;
  font-weight: 400;
  white-space: nowrap;
}

.tall {
  flex: none;
  display: flex;
  flex-direction: column;
  align-items: center;
  width: 52px;
  line-height: 20px;
}

.tall svg {
  width: 40px;
  height: 44px;
  margin: 3px 0 5px;
}

.tall .caret {
  margin-top: 5px;
}

.letter {
  height: 44px;
  margin: 3px 0 5px;
  color: #dcdedc;
  font-size: 46px;
  font-weight: 400;
  line-height: 44px;
}

.rows {
  display: flex;
  flex-direction: column;
}

.cmd {
  height: 33px;
  gap: 7px;
}

.grid {
  display: grid;
  grid-template-columns: 75px 74px 93px auto;
  align-content: start;
}

.cmd .caret {
  margin-left: 8px;
}

.combo {
  display: flex;
  align-items: center;
  height: 30px;
  padding: 0 3px 0 7px;
  gap: 8px;
  background: linear-gradient(#4c4e4c, #616361);
  border: 1px solid #363836;
}

.swatch {
  flex: none;
  width: 18px;
  height: 18px;
  background: #fff;
  border: 1px solid #222;
}

.draw {
  width: 168px;
}

.draw .tools {
  padding-left: 1px;
}

.draw h2 {
  padding-right: 95px;
}

.tall.cut {
  width: 4px;
  align-items: flex-end;
}

.tall.cut svg {
  width: 0;
}

.draw .rows {
  margin-left: 8px;
}

.draw .cmd .caret {
  margin-left: 4px;
}

.modify {
  width: 284px;
}

.annotate {
  width: 196px;
}

.annotate .tools {
  padding-left: 5px;
}

.annotate .rows {
  margin-left: 4px;
}

.annotate .cmd .caret {
  margin-left: 4px;
}

.layers {
  width: 315px;
}

.layers .tools {
  padding-left: 0;
}

.layers .rows {
  flex: 1;
}

.combo.layer {
  width: 260px;
  margin: 2px 0 1px -1px;
  padding-left: 4px;
  gap: 6px;
}

.layer svg {
  width: 19px;
}

.strip {
  display: flex;
  gap: 10px;
  height: 33px;
  padding-left: 4px;
}

.strip .wide {
  gap: 6px;
}

.block {
  width: 168px;
}

.block .tools {
  padding-left: 0;
}

.block .cmd .caret {
  margin-left: 4px;
}

.block .rows {
  margin-left: 3px;
}

.props {
  width: 305px;
}

.props .tools {
  padding-left: 0;
}

.props .icons {
  gap: 13px;
  margin-left: 1px;
  padding-top: 7px;
}

.props .fields {
  flex: 1;
  gap: 2px;
  padding: 3px 3px 0 3px;
}

.props .swatch {
  margin: 0 6px;
}

.props hr {
  flex: none;
  width: 74px;
  height: 2px;
  margin: 0 -6px 0 3px;
  border: 0;
  background: #c9cac9;
}

.props hr.long {
  width: 80px;
  margin-left: -3px;
}

.props h2 {
  position: relative;
  padding-right: 14px;
}

.launcher {
  position: absolute;
  right: 6px;
  width: 8px;
  height: 8px;
}

.group {
  width: 85px;
}

.group .tools {
  padding-left: 2px;
}

.group .tall {
  width: 48px;
}

.group .cmd {
  padding: 0 4px;
  width: 29px;
}

.cmd.on {
  height: 29px;
  margin-top: 2px;
  background: linear-gradient(#41699f, #5f8ccb);
  border: 1px solid #23426f;
}

.utils {
  width: 95px;
}

.utils .tools, .clip .tools {
  padding-left: 5px;
}

.utils .rows, .clip .rows {
  margin-left: 7px;
}

.clip {
  width: 95px;
}

.rest {
  flex: 1;
  min-width: 0;
  overflow: hidden;
}

.rest h2 {
  justify-content: flex-start;
  padding-left: 6px;
}

.filetabs {
  display: flex;
  align-items: flex-end;
  height: 33px;
  background: #373936;
}

.start {
  width: 84px;
  height: 29px;
  border-radius: 0 12px 0 0;
  background: linear-gradient(#5c5e5b, #50524f);
}

.file {
  justify-content: space-between;
  width: 157px;
  height: 30px;
  margin-left: -1px;
  padding: 0 19px 0 14px;
  border-radius: 12px 14px 0 0;
  background: linear-gradient(#777976, #5b5d5a);
}

.file span {
  color: #3b3d3a;
  font-size: 13px;
}

.add {
  justify-content: center;
  width: 27px;
  height: 22px;
  margin: 0 0 3px 7px;
  border-radius: 4px 14px 4px 10px;
  background: #555754;
  font-size: 18px;
  font-weight: 700;
  color: #c9cbc8;
}

.toolbars {
  display: flex;
  height: 41px;
  padding: 5px 0;
  background: #5a5c59;
}

.toolbar {
  display: flex;
  align-items: center;
  border: 1px solid #3a3c39;
  border-left-color: #777;
}

.toolbar button {
  justify-content: center;
  width: 29px;
  height: 28px;
}

.toolbar button.first {
  width: 5px;
  justify-content: flex-end;
}

.toolbar hr {
  width: 2px;
  height: 27px;
  margin: 0 2px;
  border: 0;
  background: #373936;
}

.toolbar .grip {
  margin: 0 3px 0 2px;
}

.dimstyle {
  display: flex;
  align-items: center;
  align-self: stretch;
  width: 150px;
  padding: 0 5px 0 24px;
  background: #fff;
  color: #222;
  font-size: 16px;
}

.dimstyle svg {
  width: 10px;
  height: 6px;
}

.grip {
  flex: none;
  width: 6px;
  height: 14px;
  border: 1px dotted #b5b5b5;
  border-width: 0 1px;
}

.ln {
  stroke: #b9bcb9;
  stroke-width: 2;
}

.bl {
  stroke: #5f8fe0;
  stroke-width: 2;
  fill: none;
}

.snap {
  fill: #0d6b43;
  stroke: #073d27;
}

.canvas {
  position: relative;
  flex: 1;
  overflow: hidden;
  background: #1f272f;
}

.drawing {
  position: absolute;
  inset: 0;
  width: 100%;
  height: 100%;
}

.cursor {
  fill: none;
  stroke: #fff;
  pointer-events: none;
}

.viewlabel {
  position: absolute;
  top: 6px;
  left: 0;
  width: 39px;
  display: flex;
  justify-content: flex-end;
  white-space: nowrap;
}

.viewcube {
  position: absolute;
  top: 0;
  right: 0;
  width: 84px;
  height: 220px;
  color: #b9bec2;
  font-size: 18px;
  line-height: 24px;
}

.viewcube svg {
  width: 84px;
  height: 220px;
}

.viewcube span {
  position: absolute;
  left: 51px;
}

.viewcube .north {
  top: 16px;
}

.viewcube .west {
  left: -6px;
  top: 76px;
}

.viewcube .top {
  left: 44px;
  top: 74px;
  color: #54585b;
  font-size: 30px;
}

.viewcube .south {
  top: 137px;
}

.viewcube button {
  position: absolute;
  top: 181px;
  left: 31px;
  width: 60px;
  height: 22px;
  padding-left: 4px;
  gap: 10px;
  border: 1px solid #8b9095;
  border-radius: 4px;
  background: #90959b;
  color: #40464c;
  font-size: 14px;
}

.viewcube .caret {
  border-top-color: #b5babf;
}

.command {
  position: absolute;
  left: 310px;
  right: 348px;
  bottom: 1px;
  height: 35px;
  display: flex;
  align-items: center;
  background: linear-gradient(#71757a, #44484b);
}

.command .grip {
  height: 22px;
  margin: 0 5px 0 5px;
  border-width: 0 2px;
}

.command button {
  margin-right: 8px;
}

.command label {
  flex: 1;
  align-self: stretch;
  display: flex;
  align-items: center;
  gap: 3px;
  margin-left: -4px;
  padding: 0 5px 0 6px;
  background: #b9bec0;
  border-top: 1px solid #d5d8d9;
}

.command label .caret:not(.up) {
  border-top-color: #555;
}

.command .caret.up {
  border-width: 0 5px 6px;
}

.command input {
  flex: 1;
  margin-left: 8px;
  font-size: 16px;
  font-style: italic;
}

.command input::placeholder {
  color: #6b7073;
}

.statusbar {
  display: flex;
  justify-content: space-between;
  height: 42px;
  background: #383a37;
  border-bottom: 4px solid #000;
}

.layouts {
  display: flex;
  height: 25px;
  color: #c9cbc8;
}

.layouts button {
  justify-content: center;
  width: 66px;
  margin: 0 2px 1px 0;
  padding-right: 2px;
  border-radius: 0 0 14px 8px;
  background: #585b57;
}

.layouts .first {
  width: 46px;
  justify-content: flex-end;
  padding-right: 16px;
}

.layouts .plus {
  width: 28px;
  padding: 0;
  margin-left: 4px;
  border-radius: 10px 2px 8px 4px;
  font-size: 18px;
  font-weight: 700;
}

.modes {
  display: flex;
  align-items: center;
  width: 619px;
  overflow: hidden;
  background: #50524f;
  border-top: 1px solid #7a7c79;
  border-left: 1px solid #8b8d8a;
  border-bottom: 3px solid #6b6d6a;
}

.modes button {
  flex: none;
  justify-content: center;
  width: 30px;
  height: 100%;
}

.modes svg {
  fill: none;
  stroke: #c9cbc8;
}

.modes .lit svg {
  stroke: #2f86f2;
  filter: drop-shadow(0 0 2px #1668dc);
}

.modes .model {
  width: 37px;
  padding-left: 2px;
  font-weight: 500;
}

.modes .scale {
  width: 22px;
}

.modes .caret {
  margin: 0 4px 0 3px;
}

.modes hr {
  flex: none;
  width: 1px;
  height: 100%;
  margin: 0;
  border: 0;
  background: #8f918e;
}

.modes hr.double {
  width: 3px;
  border: 1px solid #8f918e;
  border-width: 0 1px;
  background: none;
}

.recorder {
  position: fixed;
  left: 254px;
  bottom: 0;
  display: flex;
  align-items: center;
  width: 450px;
  height: 42px;
  padding: 2px 15px 0 142px;
  justify-content: space-between;
  border-radius: 8px 8px 0 0;
  background: #5aa5ec;
  color: #fff;
}

.recorder svg {
  width: 12px;
  height: 14px;
}

.ime {
  position: fixed;
  left: 759px;
  bottom: 0;
  width: 227px;
  height: 46px;
  padding: 7px 3px 3px 31px;
  background: #000;
}

.imebar {
  display: flex;
  align-items: center;
  justify-content: space-between;
  height: 36px;
  padding: 0 6px 0 17px;
  border-radius: 3px;
  background: #fff;
  color: #1765bd;
}

.ime .zh {
  font-size: 20px;
  font-weight: 700;
}

.sogou {
  position: absolute;
  left: 2px;
  top: 1px;
  width: 40px;
  height: 42px;
}

.watermark {
  position: fixed;
  right: 0;
  bottom: 0;
  width: 228px;
  height: 130px;
  pointer-events: none;
}

.watermark .yjk {
  font: italic 700 38px "Liberation Sans", sans-serif;
}

.watermark .zh {
  fill: #16181a;
  font: 30px "Noto Sans CJK SC", sans-serif;
}

.watermark .en {
  fill: #1d1f20;
  font: 22px "Open Sans", sans-serif;
}

.watermark .seal {
  fill: #c02a26;
  font: 41px "Noto Sans CJK TC", sans-serif;
}
```
